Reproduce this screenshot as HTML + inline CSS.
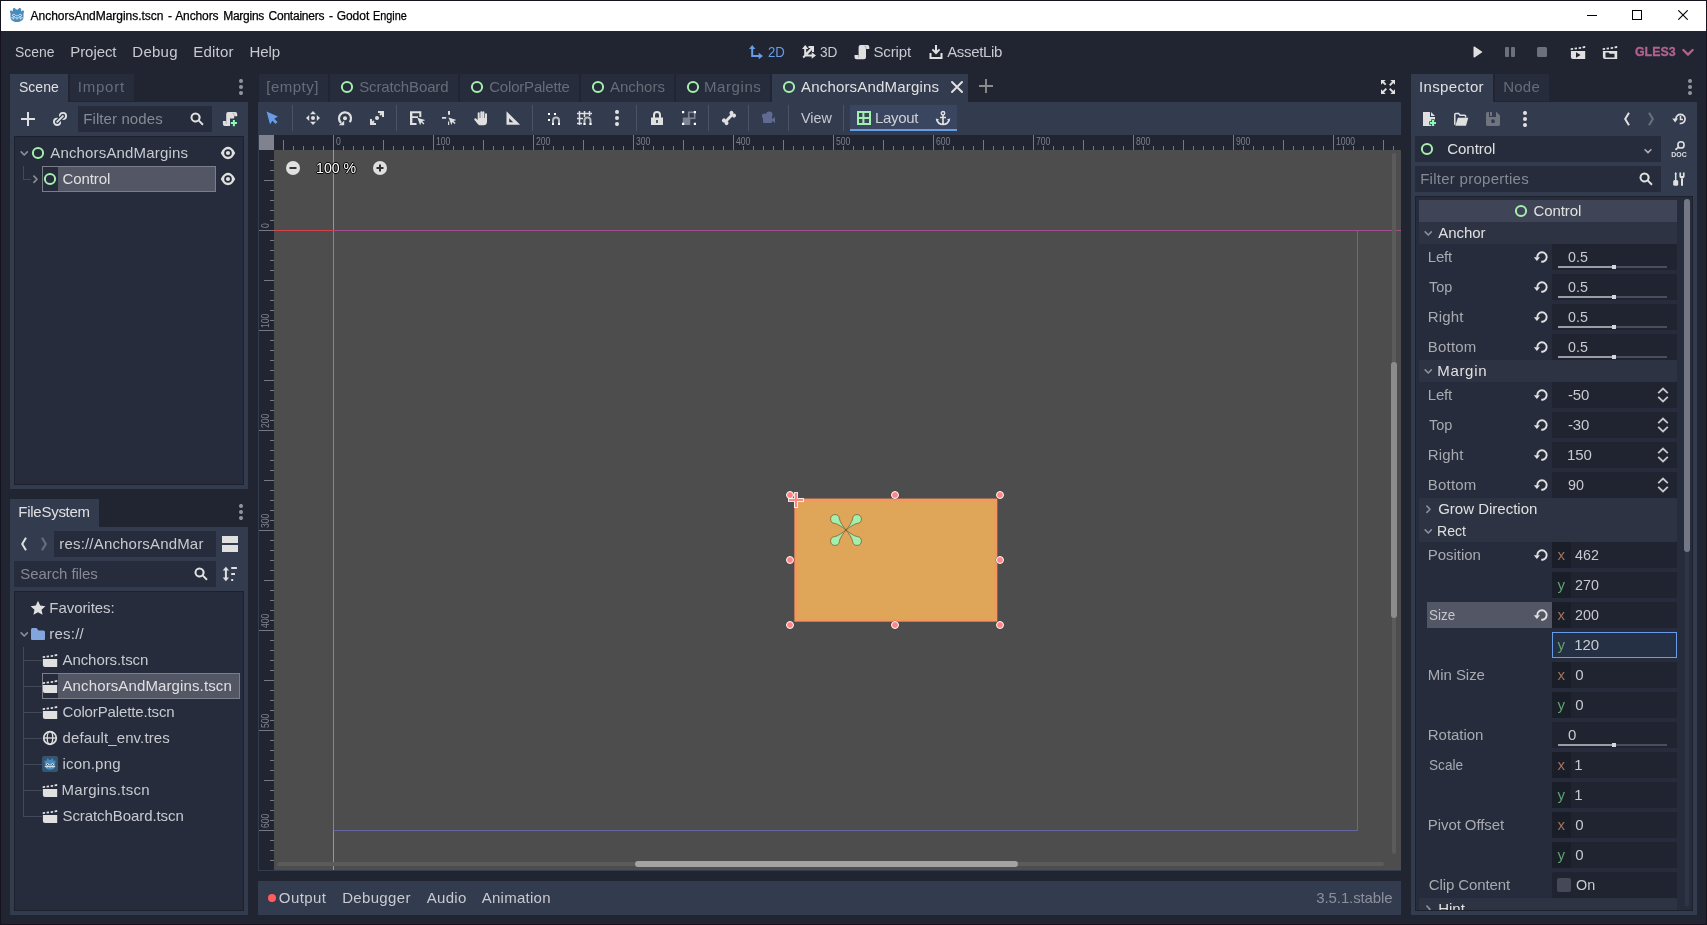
<!DOCTYPE html>
<html><head><meta charset="utf-8"><title>Godot</title>
<style>
html,body{margin:0;padding:0;}
body{width:1707px;height:925px;overflow:hidden;background:#202531;position:relative;font-family:"Liberation Sans",sans-serif;}
#r{position:absolute;left:0;top:0;width:1707px;height:925px;overflow:hidden;will-change:transform;}
#r div,#r span,#r svg{position:absolute;}
#r span{white-space:nowrap;}
</style></head><body><div id="r">
<div style="left:0px;top:0px;width:1707px;height:925px;background:#15131f;"></div>
<div style="left:1px;top:1px;width:1705px;height:30px;background:#ffffff;"></div>
<div style="left:1px;top:31px;width:1705px;height:893px;background:#202531;"></div>
<span style="left:30.60px;top:6.34px;font-size:12px;line-height:20px;color:#000000;font-weight:400;letter-spacing:-0.025px;-webkit-text-stroke:0.25px #000;">AnchorsAndMargins.tscn</span>
<span style="left:167.90px;top:6.34px;font-size:12px;line-height:20px;color:#000000;font-weight:400;-webkit-text-stroke:0.25px #000;">-</span>
<span style="left:175.20px;top:6.34px;font-size:12px;line-height:20px;color:#000000;font-weight:400;letter-spacing:-0.104px;-webkit-text-stroke:0.25px #000;">Anchors</span>
<span style="left:223.20px;top:6.34px;font-size:12px;line-height:20px;color:#000000;font-weight:400;letter-spacing:-0.263px;-webkit-text-stroke:0.25px #000;">Margins</span>
<span style="left:268.50px;top:6.34px;font-size:12px;line-height:20px;color:#000000;font-weight:400;letter-spacing:-0.226px;-webkit-text-stroke:0.25px #000;">Containers</span>
<span style="left:329.10px;top:6.34px;font-size:12px;line-height:20px;color:#000000;font-weight:400;-webkit-text-stroke:0.25px #000;">-</span>
<span style="left:336.70px;top:6.34px;font-size:12px;line-height:20px;color:#000000;font-weight:400;letter-spacing:-0.039px;-webkit-text-stroke:0.25px #000;">Godot</span>
<span style="left:373.30px;top:6.34px;font-size:12px;line-height:20px;color:#000000;font-weight:400;transform-origin:0 50%;transform:scaleX(0.9074);-webkit-text-stroke:0.25px #000;">Engine</span>
<div style="left:1587px;top:15px;width:10px;height:1px;background:#000;"></div>
<div style="left:1632px;top:10px;width:10px;height:10px;background:transparent;border:1px solid #000;box-sizing:border-box;"></div>
<svg style="left:1678.00px;top:10.00px;" width="10" height="10" viewBox="0 0 10 10"><path d="M0.3 0.3L9.7 9.7M9.7 0.3L0.3 9.7" stroke="#000" stroke-width="1.1" fill="none"/></svg>
<span style="left:15.20px;top:41.80px;font-size:15px;line-height:20px;color:#c8cad0;font-weight:400;transform-origin:0 50%;transform:scaleX(0.9291);">Scene</span>
<span style="left:70.30px;top:41.80px;font-size:15px;line-height:20px;color:#c8cad0;font-weight:400;letter-spacing:-0.086px;">Project</span>
<span style="left:132.30px;top:41.80px;font-size:15px;line-height:20px;color:#c8cad0;font-weight:400;letter-spacing:0.260px;">Debug</span>
<span style="left:193.20px;top:41.80px;font-size:15px;line-height:20px;color:#c8cad0;font-weight:400;letter-spacing:0.222px;">Editor</span>
<span style="left:249.50px;top:41.80px;font-size:15px;line-height:20px;color:#c8cad0;font-weight:400;letter-spacing:-0.069px;">Help</span>
<span style="left:767.60px;top:41.80px;font-size:15px;line-height:20px;color:#699ce8;font-weight:400;transform-origin:0 50%;transform:scaleX(0.8789);">2D</span>
<span style="left:820.00px;top:41.80px;font-size:15px;line-height:20px;color:#c8cad0;font-weight:400;transform-origin:0 50%;transform:scaleX(0.9099);">3D</span>
<span style="left:873.40px;top:41.80px;font-size:15px;line-height:20px;color:#c8cad0;font-weight:400;letter-spacing:-0.115px;">Script</span>
<span style="left:947.20px;top:41.80px;font-size:15px;line-height:20px;color:#c8cad0;font-weight:400;letter-spacing:-0.341px;">AssetLib</span>
<span style="left:1634.70px;top:42.32px;font-size:13.5px;line-height:20px;color:#b5628f;font-weight:700;transform-origin:0 50%;transform:scaleX(0.9161);-webkit-text-stroke:0.35px #b5628f;">GLES3</span>
<div style="left:10px;top:74px;width:58px;height:28px;background:#333b4f;"></div>
<div style="left:70px;top:74px;width:64px;height:27px;background:#262c3b;"></div>
<div style="left:10px;top:102px;width:238px;height:387px;background:#333b4f;"></div>
<span style="left:19.00px;top:76.80px;font-size:15px;line-height:20px;color:#e0e0e0;font-weight:400;transform-origin:0 50%;transform:scaleX(0.9339);">Scene</span>
<span style="left:77.80px;top:76.80px;font-size:15px;line-height:20px;color:#686c78;font-weight:400;letter-spacing:0.752px;">Import</span>
<div style="left:78px;top:106px;width:134px;height:26px;background:#262c3b;"></div>
<span style="left:83.20px;top:108.80px;font-size:15px;line-height:20px;color:#868a95;font-weight:400;letter-spacing:0.103px;">Filter nodes</span>
<div style="left:14px;top:136px;width:230px;height:349px;background:#262c3b;border:1px solid #1d212c;box-sizing:border-box;"></div>
<span style="left:50.30px;top:142.80px;font-size:15px;line-height:20px;color:#c8cad0;font-weight:400;letter-spacing:0.158px;">AnchorsAndMargins</span>
<div style="left:42px;top:166px;width:174px;height:26px;background:#535665;border:1px solid #7b7e89;box-sizing:border-box;"></div>
<div style="left:43px;top:167px;width:15px;height:24px;background:#262c3b;"></div>
<span style="left:62.50px;top:168.80px;font-size:15px;line-height:20px;color:#e0e0e0;font-weight:400;letter-spacing:-0.087px;">Control</span>
<div style="left:23px;top:166px;width:1px;height:14px;background:#434958;"></div>
<div style="left:23px;top:179px;width:8px;height:1px;background:#434958;"></div>
<div style="left:10px;top:499px;width:89px;height:28px;background:#333b4f;"></div>
<div style="left:10px;top:527px;width:238px;height:388px;background:#333b4f;"></div>
<span style="left:18.30px;top:502.30px;font-size:15px;line-height:20px;color:#e0e0e0;font-weight:400;letter-spacing:-0.265px;">FileSystem</span>
<div style="left:54px;top:531px;width:162px;height:26px;background:#262c3b;"></div>
<span style="left:59.30px;top:533.80px;font-size:15px;line-height:20px;color:#c8cad0;font-weight:400;letter-spacing:0.178px;">res://AnchorsAndMar</span>
<div style="left:222px;top:536px;width:16px;height:7px;background:#e0e0e0;"></div>
<div style="left:222px;top:545px;width:16px;height:7px;background:#e0e0e0;"></div>
<div style="left:14px;top:561px;width:202px;height:26px;background:#262c3b;"></div>
<span style="left:20.30px;top:563.80px;font-size:15px;line-height:20px;color:#868a95;font-weight:400;letter-spacing:-0.088px;">Search files</span>
<div style="left:14px;top:591px;width:230px;height:320px;background:#262c3b;border:1px solid #1d212c;box-sizing:border-box;"></div>
<span style="left:49.30px;top:597.80px;font-size:15px;line-height:20px;color:#c8cad0;font-weight:400;letter-spacing:-0.054px;">Favorites:</span>
<span style="left:49.30px;top:623.80px;font-size:15px;line-height:20px;color:#c8cad0;font-weight:400;letter-spacing:0.206px;">res://</span>
<div style="left:42px;top:673px;width:198px;height:26px;background:#535665;border:1px solid #7b7e89;box-sizing:border-box;"></div>
<div style="left:43px;top:674px;width:15px;height:24px;background:#262c3b;"></div>
<span style="left:62.50px;top:649.80px;font-size:15px;line-height:20px;color:#c8cad0;font-weight:400;letter-spacing:-0.078px;">Anchors.tscn</span>
<div style="left:24px;top:660px;width:18px;height:1px;background:#434958;"></div>
<span style="left:62.50px;top:675.80px;font-size:15px;line-height:20px;color:#e0e0e0;font-weight:400;letter-spacing:0.119px;">AnchorsAndMargins.tscn</span>
<div style="left:24px;top:686px;width:18px;height:1px;background:#434958;"></div>
<span style="left:62.50px;top:701.80px;font-size:15px;line-height:20px;color:#c8cad0;font-weight:400;letter-spacing:-0.130px;">ColorPalette.tscn</span>
<div style="left:24px;top:712px;width:18px;height:1px;background:#434958;"></div>
<span style="left:62.50px;top:727.80px;font-size:15px;line-height:20px;color:#c8cad0;font-weight:400;letter-spacing:0.105px;">default_env.tres</span>
<div style="left:24px;top:738px;width:18px;height:1px;background:#434958;"></div>
<span style="left:62.40px;top:753.80px;font-size:15px;line-height:20px;color:#c8cad0;font-weight:400;letter-spacing:0.204px;">icon.png</span>
<div style="left:24px;top:764px;width:18px;height:1px;background:#434958;"></div>
<span style="left:61.50px;top:779.80px;font-size:15px;line-height:20px;color:#c8cad0;font-weight:400;letter-spacing:0.274px;">Margins.tscn</span>
<div style="left:24px;top:790px;width:18px;height:1px;background:#434958;"></div>
<span style="left:62.50px;top:805.80px;font-size:15px;line-height:20px;color:#c8cad0;font-weight:400;letter-spacing:-0.082px;">ScratchBoard.tscn</span>
<div style="left:24px;top:816px;width:18px;height:1px;background:#434958;"></div>
<div style="left:23px;top:647px;width:1px;height:170px;background:#434958;"></div>
<div style="left:259px;top:74px;width:69px;height:28px;background:#262c3b;"></div>
<div style="left:330px;top:74px;width:128px;height:28px;background:#262c3b;"></div>
<div style="left:460px;top:74px;width:119px;height:28px;background:#262c3b;"></div>
<div style="left:581px;top:74px;width:93px;height:28px;background:#262c3b;"></div>
<div style="left:676px;top:74px;width:94px;height:28px;background:#262c3b;"></div>
<div style="left:772px;top:74px;width:196px;height:28px;background:#333b4f;"></div>
<span style="left:266.30px;top:76.80px;font-size:15px;line-height:20px;color:#686c78;font-weight:400;letter-spacing:0.481px;">[empty]</span>
<span style="left:359.20px;top:76.80px;font-size:15px;line-height:20px;color:#686c78;font-weight:400;letter-spacing:-0.140px;">ScratchBoard</span>
<span style="left:489.20px;top:76.80px;font-size:15px;line-height:20px;color:#686c78;font-weight:400;letter-spacing:-0.182px;">ColorPalette</span>
<span style="left:610.00px;top:76.80px;font-size:15px;line-height:20px;color:#686c78;font-weight:400;letter-spacing:-0.021px;">Anchors</span>
<span style="left:704.00px;top:76.80px;font-size:15px;line-height:20px;color:#686c78;font-weight:400;letter-spacing:0.575px;">Margins</span>
<span style="left:801.00px;top:76.80px;font-size:15px;line-height:20px;color:#e0e0e0;font-weight:400;letter-spacing:0.183px;">AnchorsAndMargins</span>
<div style="left:258px;top:102px;width:1143px;height:769px;background:#333b4f;"></div>
<div style="left:259px;top:135px;width:1142px;height:15px;background:#202531;"></div>
<div style="left:259px;top:150px;width:15px;height:720px;background:#202531;"></div>
<div style="left:259px;top:135px;width:15px;height:15px;background:#80838f;"></div>
<div style="left:274px;top:150px;width:1127px;height:720px;background:#4d4d4d;"></div>
<span style="left:801.00px;top:107.80px;font-size:15px;line-height:20px;color:#c8cad0;font-weight:400;transform-origin:0 50%;transform:scaleX(0.9565);">View</span>
<div style="left:850px;top:105px;width:107px;height:26px;background:#3a4560;"></div>
<div style="left:850px;top:129px;width:107px;height:2px;background:#699ce8;"></div>
<span style="left:874.90px;top:107.80px;font-size:15px;line-height:20px;color:#cfd1d6;font-weight:400;letter-spacing:-0.294px;">Layout</span>
<div style="left:258px;top:881px;width:1143px;height:34px;background:#333b4f;"></div>
<span style="left:278.80px;top:887.80px;font-size:15px;line-height:20px;color:#c8cad0;font-weight:400;letter-spacing:0.428px;">Output</span>
<span style="left:342.20px;top:887.80px;font-size:15px;line-height:20px;color:#c8cad0;font-weight:400;letter-spacing:0.331px;">Debugger</span>
<span style="left:426.80px;top:887.80px;font-size:15px;line-height:20px;color:#c8cad0;font-weight:400;letter-spacing:0.295px;">Audio</span>
<span style="left:481.70px;top:887.80px;font-size:15px;line-height:20px;color:#c8cad0;font-weight:400;letter-spacing:0.268px;">Animation</span>
<span style="left:1316.30px;top:887.80px;font-size:15px;line-height:20px;color:#8c909b;font-weight:400;letter-spacing:-0.110px;">3.5.1.stable</span>
<div style="left:268px;top:894px;width:8px;height:8px;background:#ff5d5d;border-radius:50%;"></div>
<div style="left:1411px;top:74px;width:82px;height:28px;background:#333b4f;"></div>
<div style="left:1495px;top:74px;width:54px;height:27px;background:#262c3b;"></div>
<div style="left:1411px;top:102px;width:286px;height:813px;background:#333b4f;"></div>
<span style="left:1419.00px;top:76.80px;font-size:15px;line-height:20px;color:#e0e0e0;font-weight:400;letter-spacing:0.362px;">Inspector</span>
<span style="left:1503.30px;top:76.80px;font-size:15px;line-height:20px;color:#686c78;font-weight:400;letter-spacing:0.194px;">Node</span>
<div style="left:1415px;top:136px;width:246px;height:26px;background:#262c3b;"></div>
<span style="left:1447.30px;top:138.80px;font-size:15px;line-height:20px;color:#e0e0e0;font-weight:400;letter-spacing:-0.054px;">Control</span>
<div style="left:1415px;top:166px;width:246px;height:26px;background:#262c3b;"></div>
<span style="left:1420.20px;top:168.80px;font-size:15px;line-height:20px;color:#868a95;font-weight:400;letter-spacing:0.269px;">Filter properties</span>
<div style="left:1415px;top:196px;width:278px;height:715px;background:#262c3b;border:1px solid #1d212c;box-sizing:border-box;"></div>
<div style="left:1419px;top:200px;width:258px;height:22px;background:#3f4556;"></div>
<span style="left:1533.60px;top:200.80px;font-size:15px;line-height:20px;color:#e0e0e0;font-weight:400;letter-spacing:-0.104px;">Control</span>
<div style="left:1419px;top:222px;width:258px;height:22px;background:#2d3343;"></div>
<span style="left:1438.20px;top:222.80px;font-size:15px;line-height:20px;color:#e0e0e0;font-weight:400;letter-spacing:-0.046px;">Anchor</span>
<svg style="left:1422.75px;top:228.25px;" width="10.5" height="10.5" viewBox="2 2 12 12"><path d="M4.5 6.5L8 10L11.5 6.5" stroke="#8a8e99" stroke-width="1.9" fill="none" stroke-linecap="round" stroke-linejoin="round"/></svg>
<span style="left:1427.80px;top:246.80px;font-size:15px;line-height:20px;color:#a8aab0;font-weight:400;letter-spacing:-0.217px;">Left</span>
<svg style="left:1533.30px;top:249.00px;" width="16" height="16" viewBox="0 0 16 16"><path d="M4.3 8.5A4.7 4.7 0 1 1 8.2 12.65" fill="none" stroke="#e0e0e0" stroke-width="1.9"/><path d="M0.8 8.2h6.2l-3.1 3.7z" fill="#e0e0e0"/></svg>
<div style="left:1552px;top:244px;width:125px;height:26px;background:#1f2430;"></div>
<span style="left:1568.00px;top:246.80px;font-size:15px;line-height:20px;color:#c8cad0;font-weight:400;transform-origin:0 50%;transform:scaleX(0.9508);">0.5</span>
<div style="left:1558px;top:266px;width:56px;height:2px;background:#9a9da6;"></div>
<div style="left:1614px;top:266px;width:53px;height:2px;background:#4a4e5b;"></div>
<div style="left:1612px;top:265px;width:4px;height:4px;background:#d6d7da;"></div>
<span style="left:1428.80px;top:276.80px;font-size:15px;line-height:20px;color:#a8aab0;font-weight:400;transform-origin:0 50%;transform:scaleX(0.9647);">Top</span>
<svg style="left:1533.30px;top:279.00px;" width="16" height="16" viewBox="0 0 16 16"><path d="M4.3 8.5A4.7 4.7 0 1 1 8.2 12.65" fill="none" stroke="#e0e0e0" stroke-width="1.9"/><path d="M0.8 8.2h6.2l-3.1 3.7z" fill="#e0e0e0"/></svg>
<div style="left:1552px;top:274px;width:125px;height:26px;background:#1f2430;"></div>
<span style="left:1568.00px;top:276.80px;font-size:15px;line-height:20px;color:#c8cad0;font-weight:400;transform-origin:0 50%;transform:scaleX(0.9508);">0.5</span>
<div style="left:1558px;top:296px;width:56px;height:2px;background:#9a9da6;"></div>
<div style="left:1614px;top:296px;width:53px;height:2px;background:#4a4e5b;"></div>
<div style="left:1612px;top:295px;width:4px;height:4px;background:#d6d7da;"></div>
<span style="left:1427.80px;top:306.80px;font-size:15px;line-height:20px;color:#a8aab0;font-weight:400;letter-spacing:0.138px;">Right</span>
<svg style="left:1533.30px;top:309.00px;" width="16" height="16" viewBox="0 0 16 16"><path d="M4.3 8.5A4.7 4.7 0 1 1 8.2 12.65" fill="none" stroke="#e0e0e0" stroke-width="1.9"/><path d="M0.8 8.2h6.2l-3.1 3.7z" fill="#e0e0e0"/></svg>
<div style="left:1552px;top:304px;width:125px;height:26px;background:#1f2430;"></div>
<span style="left:1568.00px;top:306.80px;font-size:15px;line-height:20px;color:#c8cad0;font-weight:400;transform-origin:0 50%;transform:scaleX(0.9508);">0.5</span>
<div style="left:1558px;top:326px;width:56px;height:2px;background:#9a9da6;"></div>
<div style="left:1614px;top:326px;width:53px;height:2px;background:#4a4e5b;"></div>
<div style="left:1612px;top:325px;width:4px;height:4px;background:#d6d7da;"></div>
<span style="left:1427.80px;top:336.80px;font-size:15px;line-height:20px;color:#a8aab0;font-weight:400;letter-spacing:0.195px;">Bottom</span>
<svg style="left:1533.30px;top:339.00px;" width="16" height="16" viewBox="0 0 16 16"><path d="M4.3 8.5A4.7 4.7 0 1 1 8.2 12.65" fill="none" stroke="#e0e0e0" stroke-width="1.9"/><path d="M0.8 8.2h6.2l-3.1 3.7z" fill="#e0e0e0"/></svg>
<div style="left:1552px;top:334px;width:125px;height:26px;background:#1f2430;"></div>
<span style="left:1568.00px;top:336.80px;font-size:15px;line-height:20px;color:#c8cad0;font-weight:400;transform-origin:0 50%;transform:scaleX(0.9508);">0.5</span>
<div style="left:1558px;top:356px;width:56px;height:2px;background:#9a9da6;"></div>
<div style="left:1614px;top:356px;width:53px;height:2px;background:#4a4e5b;"></div>
<div style="left:1612px;top:355px;width:4px;height:4px;background:#d6d7da;"></div>
<div style="left:1419px;top:360px;width:258px;height:22px;background:#2d3343;"></div>
<span style="left:1437.20px;top:360.80px;font-size:15px;line-height:20px;color:#e0e0e0;font-weight:400;letter-spacing:0.699px;">Margin</span>
<svg style="left:1422.75px;top:366.25px;" width="10.5" height="10.5" viewBox="2 2 12 12"><path d="M4.5 6.5L8 10L11.5 6.5" stroke="#8a8e99" stroke-width="1.9" fill="none" stroke-linecap="round" stroke-linejoin="round"/></svg>
<span style="left:1427.80px;top:384.80px;font-size:15px;line-height:20px;color:#a8aab0;font-weight:400;letter-spacing:-0.217px;">Left</span>
<svg style="left:1533.30px;top:387.00px;" width="16" height="16" viewBox="0 0 16 16"><path d="M4.3 8.5A4.7 4.7 0 1 1 8.2 12.65" fill="none" stroke="#e0e0e0" stroke-width="1.9"/><path d="M0.8 8.2h6.2l-3.1 3.7z" fill="#e0e0e0"/></svg>
<div style="left:1552px;top:382px;width:125px;height:26px;background:#1f2430;"></div>
<span style="left:1568.00px;top:384.80px;font-size:15px;line-height:20px;color:#c8cad0;font-weight:400;letter-spacing:-0.169px;">-50</span>
<svg style="left:1655.00px;top:387.00px;" width="16" height="16" viewBox="0 0 16 16"><path d="M3.200 6.200L8 1.600L12.800 6.200M3.200 9.800L8 14.400L12.800 9.800" stroke="#c8c8c8" stroke-width="1.800" fill="none"/></svg>
<span style="left:1428.80px;top:414.80px;font-size:15px;line-height:20px;color:#a8aab0;font-weight:400;transform-origin:0 50%;transform:scaleX(0.9647);">Top</span>
<svg style="left:1533.30px;top:417.00px;" width="16" height="16" viewBox="0 0 16 16"><path d="M4.3 8.5A4.7 4.7 0 1 1 8.2 12.65" fill="none" stroke="#e0e0e0" stroke-width="1.9"/><path d="M0.8 8.2h6.2l-3.1 3.7z" fill="#e0e0e0"/></svg>
<div style="left:1552px;top:412px;width:125px;height:26px;background:#1f2430;"></div>
<span style="left:1568.00px;top:414.80px;font-size:15px;line-height:20px;color:#c8cad0;font-weight:400;letter-spacing:-0.169px;">-30</span>
<svg style="left:1655.00px;top:417.00px;" width="16" height="16" viewBox="0 0 16 16"><path d="M3.200 6.200L8 1.600L12.800 6.200M3.200 9.800L8 14.400L12.800 9.800" stroke="#c8c8c8" stroke-width="1.800" fill="none"/></svg>
<span style="left:1427.80px;top:444.80px;font-size:15px;line-height:20px;color:#a8aab0;font-weight:400;letter-spacing:0.138px;">Right</span>
<svg style="left:1533.30px;top:447.00px;" width="16" height="16" viewBox="0 0 16 16"><path d="M4.3 8.5A4.7 4.7 0 1 1 8.2 12.65" fill="none" stroke="#e0e0e0" stroke-width="1.9"/><path d="M0.8 8.2h6.2l-3.1 3.7z" fill="#e0e0e0"/></svg>
<div style="left:1552px;top:442px;width:125px;height:26px;background:#1f2430;"></div>
<span style="left:1567.00px;top:444.80px;font-size:15px;line-height:20px;color:#c8cad0;font-weight:400;letter-spacing:-0.042px;">150</span>
<svg style="left:1655.00px;top:447.00px;" width="16" height="16" viewBox="0 0 16 16"><path d="M3.200 6.200L8 1.600L12.800 6.200M3.200 9.800L8 14.400L12.800 9.800" stroke="#c8c8c8" stroke-width="1.800" fill="none"/></svg>
<span style="left:1427.80px;top:474.80px;font-size:15px;line-height:20px;color:#a8aab0;font-weight:400;letter-spacing:0.195px;">Bottom</span>
<svg style="left:1533.30px;top:477.00px;" width="16" height="16" viewBox="0 0 16 16"><path d="M4.3 8.5A4.7 4.7 0 1 1 8.2 12.65" fill="none" stroke="#e0e0e0" stroke-width="1.9"/><path d="M0.8 8.2h6.2l-3.1 3.7z" fill="#e0e0e0"/></svg>
<div style="left:1552px;top:472px;width:125px;height:26px;background:#1f2430;"></div>
<span style="left:1568.00px;top:474.80px;font-size:15px;line-height:20px;color:#c8cad0;font-weight:400;transform-origin:0 50%;transform:scaleX(0.9546);">90</span>
<svg style="left:1655.00px;top:477.00px;" width="16" height="16" viewBox="0 0 16 16"><path d="M3.200 6.200L8 1.600L12.800 6.200M3.200 9.800L8 14.400L12.800 9.800" stroke="#c8c8c8" stroke-width="1.800" fill="none"/></svg>
<div style="left:1419px;top:498px;width:258px;height:22px;background:#2d3343;"></div>
<span style="left:1438.20px;top:498.80px;font-size:15px;line-height:20px;color:#e0e0e0;font-weight:400;letter-spacing:-0.004px;">Grow Direction</span>
<svg style="left:1422.75px;top:503.75px;" width="10.5" height="10.5" viewBox="2 2 12 12"><path d="M6.5 4.5L10 8L6.5 11.5" stroke="#8a8e99" stroke-width="1.9" fill="none" stroke-linecap="round" stroke-linejoin="round"/></svg>
<div style="left:1419px;top:520px;width:258px;height:22px;background:#2d3343;"></div>
<span style="left:1437.26px;top:520.80px;font-size:15px;line-height:20px;color:#e0e0e0;font-weight:400;transform-origin:0 50%;transform:scaleX(0.9389);">Rect</span>
<svg style="left:1422.75px;top:526.25px;" width="10.5" height="10.5" viewBox="2 2 12 12"><path d="M4.5 6.5L8 10L11.5 6.5" stroke="#8a8e99" stroke-width="1.9" fill="none" stroke-linecap="round" stroke-linejoin="round"/></svg>
<span style="left:1427.80px;top:544.80px;font-size:15px;line-height:20px;color:#a8aab0;font-weight:400;letter-spacing:-0.046px;">Position</span>
<svg style="left:1533.30px;top:547.00px;" width="16" height="16" viewBox="0 0 16 16"><path d="M4.3 8.5A4.7 4.7 0 1 1 8.2 12.65" fill="none" stroke="#e0e0e0" stroke-width="1.9"/><path d="M0.8 8.2h6.2l-3.1 3.7z" fill="#e0e0e0"/></svg>
<div style="left:1552px;top:542px;width:125px;height:26px;background:#1f2430;"></div>
<div style="left:1552px;top:542px;width:19px;height:26px;background:#1a1e29;"></div>
<span style="left:1557.60px;top:544.80px;font-size:15px;line-height:20px;color:#a4705f;font-weight:400;">x</span>
<span style="left:1575.20px;top:544.80px;font-size:15px;line-height:20px;color:#c8cad0;font-weight:400;transform-origin:0 50%;transform:scaleX(0.9520);">462</span>
<div style="left:1552px;top:572px;width:125px;height:26px;background:#1f2430;"></div>
<div style="left:1552px;top:572px;width:19px;height:26px;background:#1a1e29;"></div>
<span style="left:1557.60px;top:574.80px;font-size:15px;line-height:20px;color:#5fa070;font-weight:400;">y</span>
<span style="left:1575.20px;top:574.80px;font-size:15px;line-height:20px;color:#c8cad0;font-weight:400;transform-origin:0 50%;transform:scaleX(0.9520);">270</span>
<div style="left:1427px;top:602px;width:125px;height:26px;background:#535665;"></div>
<span style="left:1428.80px;top:604.80px;font-size:15px;line-height:20px;color:#c4c6cc;font-weight:400;transform-origin:0 50%;transform:scaleX(0.8947);">Size</span>
<svg style="left:1533.30px;top:607.00px;" width="16" height="16" viewBox="0 0 16 16"><path d="M4.3 8.5A4.7 4.7 0 1 1 8.2 12.65" fill="none" stroke="#e0e0e0" stroke-width="1.9"/><path d="M0.8 8.2h6.2l-3.1 3.7z" fill="#e0e0e0"/></svg>
<div style="left:1552px;top:602px;width:125px;height:26px;background:#1f2430;"></div>
<div style="left:1552px;top:602px;width:19px;height:26px;background:#1a1e29;"></div>
<span style="left:1557.60px;top:604.80px;font-size:15px;line-height:20px;color:#a4705f;font-weight:400;">x</span>
<span style="left:1575.20px;top:604.80px;font-size:15px;line-height:20px;color:#c8cad0;font-weight:400;transform-origin:0 50%;transform:scaleX(0.9520);">200</span>
<div style="left:1552px;top:632px;width:125px;height:26px;background:#263045;border:1px solid #699ce8;box-sizing:border-box;"></div>
<span style="left:1557.60px;top:634.80px;font-size:15px;line-height:20px;color:#5fa070;font-weight:400;">y</span>
<span style="left:1574.20px;top:634.80px;font-size:15px;line-height:20px;color:#c8cad0;font-weight:400;letter-spacing:-0.092px;">120</span>
<span style="left:1427.80px;top:664.80px;font-size:15px;line-height:20px;color:#a8aab0;font-weight:400;letter-spacing:-0.054px;">Min Size</span>
<div style="left:1552px;top:662px;width:125px;height:26px;background:#1f2430;"></div>
<div style="left:1552px;top:662px;width:19px;height:26px;background:#1a1e29;"></div>
<span style="left:1557.60px;top:664.80px;font-size:15px;line-height:20px;color:#a4705f;font-weight:400;">x</span>
<span style="left:1575.20px;top:664.80px;font-size:15px;line-height:20px;color:#c8cad0;font-weight:400;">0</span>
<div style="left:1552px;top:692px;width:125px;height:26px;background:#1f2430;"></div>
<div style="left:1552px;top:692px;width:19px;height:26px;background:#1a1e29;"></div>
<span style="left:1557.60px;top:694.80px;font-size:15px;line-height:20px;color:#5fa070;font-weight:400;">y</span>
<span style="left:1575.20px;top:694.80px;font-size:15px;line-height:20px;color:#c8cad0;font-weight:400;">0</span>
<span style="left:1427.80px;top:724.80px;font-size:15px;line-height:20px;color:#a8aab0;font-weight:400;letter-spacing:-0.047px;">Rotation</span>
<div style="left:1552px;top:722px;width:125px;height:26px;background:#1f2430;"></div>
<span style="left:1568.00px;top:724.80px;font-size:15px;line-height:20px;color:#c8cad0;font-weight:400;">0</span>
<div style="left:1558px;top:744px;width:56px;height:2px;background:#9a9da6;"></div>
<div style="left:1614px;top:744px;width:53px;height:2px;background:#4a4e5b;"></div>
<div style="left:1612px;top:743px;width:4px;height:4px;background:#d6d7da;"></div>
<span style="left:1428.80px;top:754.80px;font-size:15px;line-height:20px;color:#a8aab0;font-weight:400;transform-origin:0 50%;transform:scaleX(0.9091);">Scale</span>
<div style="left:1552px;top:752px;width:125px;height:26px;background:#1f2430;"></div>
<div style="left:1552px;top:752px;width:19px;height:26px;background:#1a1e29;"></div>
<span style="left:1557.60px;top:754.80px;font-size:15px;line-height:20px;color:#a4705f;font-weight:400;">x</span>
<span style="left:1574.20px;top:754.80px;font-size:15px;line-height:20px;color:#c8cad0;font-weight:400;">1</span>
<div style="left:1552px;top:782px;width:125px;height:26px;background:#1f2430;"></div>
<div style="left:1552px;top:782px;width:19px;height:26px;background:#1a1e29;"></div>
<span style="left:1557.60px;top:784.80px;font-size:15px;line-height:20px;color:#5fa070;font-weight:400;">y</span>
<span style="left:1574.20px;top:784.80px;font-size:15px;line-height:20px;color:#c8cad0;font-weight:400;">1</span>
<span style="left:1427.80px;top:814.80px;font-size:15px;line-height:20px;color:#a8aab0;font-weight:400;letter-spacing:-0.081px;">Pivot Offset</span>
<div style="left:1552px;top:812px;width:125px;height:26px;background:#1f2430;"></div>
<div style="left:1552px;top:812px;width:19px;height:26px;background:#1a1e29;"></div>
<span style="left:1557.60px;top:814.80px;font-size:15px;line-height:20px;color:#a4705f;font-weight:400;">x</span>
<span style="left:1575.20px;top:814.80px;font-size:15px;line-height:20px;color:#c8cad0;font-weight:400;">0</span>
<div style="left:1552px;top:842px;width:125px;height:26px;background:#1f2430;"></div>
<div style="left:1552px;top:842px;width:19px;height:26px;background:#1a1e29;"></div>
<span style="left:1557.60px;top:844.80px;font-size:15px;line-height:20px;color:#5fa070;font-weight:400;">y</span>
<span style="left:1575.20px;top:844.80px;font-size:15px;line-height:20px;color:#c8cad0;font-weight:400;">0</span>
<span style="left:1428.80px;top:874.80px;font-size:15px;line-height:20px;color:#a8aab0;font-weight:400;letter-spacing:-0.107px;">Clip Content</span>
<div style="left:1552px;top:872px;width:125px;height:26px;background:#1f2430;"></div>
<div style="left:1557px;top:878px;width:14px;height:14px;background:#454957;border-radius:2px;"></div>
<span style="left:1576.40px;top:874.80px;font-size:15px;line-height:20px;color:#c8cad0;font-weight:400;transform-origin:0 50%;transform:scaleX(0.9559);">On</span>
<div style="left:1416px;top:898px;width:276px;height:12px;overflow:hidden;">
<div style="left:3px;top:0px;width:258px;height:22px;background:#2d3343;"></div>
<span style="left:22.2px;top:0.80px;font-size:15px;line-height:20px;color:#e0e0e0;">Hint</span>
<svg style="left:6.7px;top:5.7px" width="10.5" height="10.5" viewBox="2 2 12 12"><path d="M6.5 4.5L10 8L6.5 11.5" stroke="#8a8e99" stroke-width="2" fill="none" stroke-linecap="round" stroke-linejoin="round"/></svg>
</div>
<div style="left:1685px;top:199px;width:4px;height:708px;background:#2f3545;border-radius:2px;"></div>
<div style="left:1684px;top:199px;width:6px;height:353px;background:#747886;border-radius:3px;"></div>
<div style="left:274px;top:150px;width:1127px;height:720px;overflow:hidden;">
<div style="left:59px;top:80px;width:1025px;height:601px;background:transparent;border:1px solid #6466a3;box-sizing:border-box;"></div>
<div style="left:0px;top:80px;width:59px;height:1px;background:#d4414b;"></div>
<div style="left:59px;top:80px;width:1068px;height:1px;background:#a04f8d;"></div>
<div style="left:59px;top:0px;width:1px;height:80px;background:#8db516;"></div>
<div style="left:59px;top:81px;width:1px;height:600px;background:#72996a;"></div>
<div style="left:59px;top:681px;width:1px;height:39px;background:#8db516;"></div>
<svg style="left:506px;top:335px" width="232" height="152" viewBox="780 485 232 152"><rect x="795.6" y="499.8" width="200.500" height="120.600" fill="#dfa559" stroke="#f7955f" stroke-width="2.500"/><circle cx="790" cy="495" r="4.300" fill="#333" fill-opacity=".750"/><circle cx="790" cy="495" r="3.500" fill="#ff8484" stroke="#fff" stroke-width="1"/><circle cx="895" cy="495" r="4.300" fill="#333" fill-opacity=".750"/><circle cx="895" cy="495" r="3.500" fill="#ff8484" stroke="#fff" stroke-width="1"/><circle cx="1000" cy="495" r="4.300" fill="#333" fill-opacity=".750"/><circle cx="1000" cy="495" r="3.500" fill="#ff8484" stroke="#fff" stroke-width="1"/><circle cx="790" cy="560" r="4.300" fill="#333" fill-opacity=".750"/><circle cx="790" cy="560" r="3.500" fill="#ff8484" stroke="#fff" stroke-width="1"/><circle cx="1000" cy="560" r="4.300" fill="#333" fill-opacity=".750"/><circle cx="1000" cy="560" r="3.500" fill="#ff8484" stroke="#fff" stroke-width="1"/><circle cx="790" cy="625" r="4.300" fill="#333" fill-opacity=".750"/><circle cx="790" cy="625" r="3.500" fill="#ff8484" stroke="#fff" stroke-width="1"/><circle cx="895" cy="625" r="4.300" fill="#333" fill-opacity=".750"/><circle cx="895" cy="625" r="3.500" fill="#ff8484" stroke="#fff" stroke-width="1"/><circle cx="1000" cy="625" r="4.300" fill="#333" fill-opacity=".750"/><circle cx="1000" cy="625" r="3.500" fill="#ff8484" stroke="#fff" stroke-width="1"/></svg>
<svg style="left:552px;top:360px" width="40" height="40" viewBox="-20 -20 40 40"><path d="M0 0C-2.500 -2.200 -8.400 -6.360 -11.380 -6.620A4.400 4.400 0 1 1 -6.620 -11.380C-6.360 -8.400 -2.200 -2.500 0 0Z" fill="#a5efac" stroke="#6a5630" stroke-width="0.700"/><g transform="scale(-1 1)"><path d="M0 0C-2.500 -2.200 -8.400 -6.360 -11.380 -6.620A4.400 4.400 0 1 1 -6.620 -11.380C-6.360 -8.400 -2.200 -2.500 0 0Z" fill="#a5efac" stroke="#6a5630" stroke-width="0.700"/></g><g transform="scale(1 -1)"><path d="M0 0C-2.500 -2.200 -8.400 -6.360 -11.380 -6.620A4.400 4.400 0 1 1 -6.620 -11.380C-6.360 -8.400 -2.200 -2.500 0 0Z" fill="#a5efac" stroke="#6a5630" stroke-width="0.700"/></g><g transform="scale(-1 -1)"><path d="M0 0C-2.500 -2.200 -8.400 -6.360 -11.380 -6.620A4.400 4.400 0 1 1 -6.620 -11.380C-6.360 -8.400 -2.200 -2.500 0 0Z" fill="#a5efac" stroke="#6a5630" stroke-width="0.700"/></g></svg>
<svg style="left:512px;top:340px" width="20" height="20" viewBox="-10 -10 20 20"><path d="M-2 -8h4v6h6v4h-6v6h-4v-6h-6v-4h6z" fill="#ffffff" fill-opacity="0.85"/><path d="M-1 -7h2v6h6v2h-6v6h-2v-6h-6v-2h6z" fill="#ff8484"/></svg>
<div style="left:1118px;top:3px;width:4px;height:701px;background:#5b5b5b;border-radius:2px;"></div>
<div style="left:1117px;top:212px;width:6px;height:256px;background:#8c8c8c;border-radius:3px;"></div>
<div style="left:3px;top:712px;width:1107px;height:4px;background:#5b5b5b;border-radius:2px;"></div>
<div style="left:361px;top:711px;width:383px;height:6px;background:#a3a3a3;border-radius:3px;"></div>
</div>
<svg style="left:0;top:0" width="1707" height="160" viewBox="0 0 1707 160"><path d="M283.5 140V150M293.5 146V150M303.5 146V150M313.5 146V150M323.5 146V150M333.5 135V150M343.5 146V150M353.5 146V150M363.5 146V150M373.5 146V150M383.5 140V150M393.5 146V150M403.5 146V150M413.5 146V150M423.5 146V150M433.5 135V150M443.5 146V150M453.5 146V150M463.5 146V150M473.5 146V150M483.5 140V150M493.5 146V150M503.5 146V150M513.5 146V150M523.5 146V150M533.5 135V150M543.5 146V150M553.5 146V150M563.5 146V150M573.5 146V150M583.5 140V150M593.5 146V150M603.5 146V150M613.5 146V150M623.5 146V150M633.5 135V150M643.5 146V150M653.5 146V150M663.5 146V150M673.5 146V150M683.5 140V150M693.5 146V150M703.5 146V150M713.5 146V150M723.5 146V150M733.5 135V150M743.5 146V150M753.5 146V150M763.5 146V150M773.5 146V150M783.5 140V150M793.5 146V150M803.5 146V150M813.5 146V150M823.5 146V150M833.5 135V150M843.5 146V150M853.5 146V150M863.5 146V150M873.5 146V150M883.5 140V150M893.5 146V150M903.5 146V150M913.5 146V150M923.5 146V150M933.5 135V150M943.5 146V150M953.5 146V150M963.5 146V150M973.5 146V150M983.5 140V150M993.5 146V150M1003.5 146V150M1013.5 146V150M1023.5 146V150M1033.5 135V150M1043.5 146V150M1053.5 146V150M1063.5 146V150M1073.5 146V150M1083.5 140V150M1093.5 146V150M1103.5 146V150M1113.5 146V150M1123.5 146V150M1133.5 135V150M1143.5 146V150M1153.5 146V150M1163.5 146V150M1173.5 146V150M1183.5 140V150M1193.5 146V150M1203.5 146V150M1213.5 146V150M1223.5 146V150M1233.5 135V150M1243.5 146V150M1253.5 146V150M1263.5 146V150M1273.5 146V150M1283.5 140V150M1293.5 146V150M1303.5 146V150M1313.5 146V150M1323.5 146V150M1333.5 135V150M1343.5 146V150M1353.5 146V150M1363.5 146V150M1373.5 146V150M1383.5 140V150M1393.5 146V150" stroke="#757987" stroke-width="1" fill="none"/></svg>
<span style="left:336px;top:136px;font-size:10px;line-height:11px;color:#7d818d;transform-origin:0 0;transform:scaleX(0.86);">0</span>
<span style="left:436px;top:136px;font-size:10px;line-height:11px;color:#7d818d;transform-origin:0 0;transform:scaleX(0.86);">100</span>
<span style="left:536px;top:136px;font-size:10px;line-height:11px;color:#7d818d;transform-origin:0 0;transform:scaleX(0.86);">200</span>
<span style="left:636px;top:136px;font-size:10px;line-height:11px;color:#7d818d;transform-origin:0 0;transform:scaleX(0.86);">300</span>
<span style="left:736px;top:136px;font-size:10px;line-height:11px;color:#7d818d;transform-origin:0 0;transform:scaleX(0.86);">400</span>
<span style="left:836px;top:136px;font-size:10px;line-height:11px;color:#7d818d;transform-origin:0 0;transform:scaleX(0.86);">500</span>
<span style="left:936px;top:136px;font-size:10px;line-height:11px;color:#7d818d;transform-origin:0 0;transform:scaleX(0.86);">600</span>
<span style="left:1036px;top:136px;font-size:10px;line-height:11px;color:#7d818d;transform-origin:0 0;transform:scaleX(0.86);">700</span>
<span style="left:1136px;top:136px;font-size:10px;line-height:11px;color:#7d818d;transform-origin:0 0;transform:scaleX(0.86);">800</span>
<span style="left:1236px;top:136px;font-size:10px;line-height:11px;color:#7d818d;transform-origin:0 0;transform:scaleX(0.86);">900</span>
<span style="left:1336px;top:136px;font-size:10px;line-height:11px;color:#7d818d;transform-origin:0 0;transform:scaleX(0.86);">1000</span>
<svg style="left:0;top:0" width="280" height="925" viewBox="0 0 280 925"><path d="M270 160.5H274M270 170.5H274M264 180.5H274M270 190.5H274M270 200.5H274M270 210.5H274M270 220.5H274M259 230.5H274M270 240.5H274M270 250.5H274M270 260.5H274M270 270.5H274M264 280.5H274M270 290.5H274M270 300.5H274M270 310.5H274M270 320.5H274M259 330.5H274M270 340.5H274M270 350.5H274M270 360.5H274M270 370.5H274M264 380.5H274M270 390.5H274M270 400.5H274M270 410.5H274M270 420.5H274M259 430.5H274M270 440.5H274M270 450.5H274M270 460.5H274M270 470.5H274M264 480.5H274M270 490.5H274M270 500.5H274M270 510.5H274M270 520.5H274M259 530.5H274M270 540.5H274M270 550.5H274M270 560.5H274M270 570.5H274M264 580.5H274M270 590.5H274M270 600.5H274M270 610.5H274M270 620.5H274M259 630.5H274M270 640.5H274M270 650.5H274M270 660.5H274M270 670.5H274M264 680.5H274M270 690.5H274M270 700.5H274M270 710.5H274M270 720.5H274M259 730.5H274M270 740.5H274M270 750.5H274M270 760.5H274M270 770.5H274M264 780.5H274M270 790.5H274M270 800.5H274M270 810.5H274M270 820.5H274M259 830.5H274M270 840.5H274M270 850.5H274M270 860.5H274" stroke="#757987" stroke-width="1" fill="none"/></svg>
<span style="left:259.5px;top:227.5px;font-size:10px;line-height:11px;color:#7d818d;transform-origin:0 0;transform:rotate(-90deg) scaleX(0.86);">0</span>
<span style="left:259.5px;top:327.5px;font-size:10px;line-height:11px;color:#7d818d;transform-origin:0 0;transform:rotate(-90deg) scaleX(0.86);">100</span>
<span style="left:259.5px;top:427.5px;font-size:10px;line-height:11px;color:#7d818d;transform-origin:0 0;transform:rotate(-90deg) scaleX(0.86);">200</span>
<span style="left:259.5px;top:527.5px;font-size:10px;line-height:11px;color:#7d818d;transform-origin:0 0;transform:rotate(-90deg) scaleX(0.86);">300</span>
<span style="left:259.5px;top:627.5px;font-size:10px;line-height:11px;color:#7d818d;transform-origin:0 0;transform:rotate(-90deg) scaleX(0.86);">400</span>
<span style="left:259.5px;top:727.5px;font-size:10px;line-height:11px;color:#7d818d;transform-origin:0 0;transform:rotate(-90deg) scaleX(0.86);">500</span>
<span style="left:259.5px;top:827.5px;font-size:10px;line-height:11px;color:#7d818d;transform-origin:0 0;transform:rotate(-90deg) scaleX(0.86);">600</span>
<svg style="left:285.00px;top:160.00px;" width="16" height="16" viewBox="0 0 16 16"><circle cx="8" cy="8" r="7" fill="#e0e0e0"/><path d="M4.5 8h7" stroke="#333" stroke-width="2"/></svg>
<svg style="left:372.00px;top:160.00px;" width="16" height="16" viewBox="0 0 16 16"><circle cx="8" cy="8" r="7" fill="#e0e0e0"/><path d="M4.5 8h7M8 4.5v7" stroke="#333" stroke-width="2"/></svg>
<span style="left:315.56px;top:157.80px;font-size:15px;line-height:20px;color:#ffffff;font-weight:400;transform-origin:0 50%;transform:scaleX(0.9443);text-shadow:0 1px 0 #000,0 -1px 0 #000,1px 0 0 #000,-1px 0 0 #000;">100 %</span>
<svg style="left:9.00px;top:7.00px;" width="16" height="16" viewBox="0 0 16 16"><path d="M.900 5.200L1.200 3.700 2.500 3.400 3.600 4.400 4 2 4.600 1 5.800 .900 6.400 1.800 7 2.600H9L9.600 1.800 10.200 .900 11.400 1 12 2 12.400 4.400 13.500 3.400 14.800 3.700 15.100 5.200 14.500 6V11C14.300 13.300 11.500 15 8 15S1.700 13.300 1.500 11V6Z" fill="#478cbf"/><circle cx="4.900" cy="8.200" r="1.500" fill="#fff"/><circle cx="11.100" cy="8.200" r="1.500" fill="#fff"/><circle cx="5" cy="8.300" r=".800" fill="#414042"/><circle cx="11" cy="8.300" r=".800" fill="#414042"/><rect x="7.400" y="7.700" width="1.200" height="1.900" rx=".500" fill="#d6e6f2"/><path d="M1.500 10.400H14.500V11.200H12.200V12.600H11.400V11.200H8.400V12.600H7.600V11.200H4.600V12.600H3.800V11.200H1.500Z" fill="#fff" opacity=".900"/></svg>
<svg style="left:748.00px;top:44.00px;" width="16" height="16" viewBox="0 0 16 16"><path d="M4.2 1L1 5h2.200v8h7.500v2.200L15 12l-4.300-3.200V11H5.200V5h2.200z" fill="#699ce8" /></svg>
<svg style="left:800.90px;top:44.00px;" width="16" height="16" viewBox="0 0 16 16"><path d="M4.200 1L1 5h2.200v6.100l-1.700 1.700 1.400 1.400L4.600 12.500h6.100v2.200L15 11.500l-4.300-3.200v2.200H6.600L11 6.100V8h2V2.500 2H7.500v2h2.100L5.200 8.400V5h2.200z" fill="#e0e0e0" /></svg>
<svg style="left:854.00px;top:44.00px;" width="16" height="16" viewBox="0 0 16 16"><path d="M6.600 1H13.300A2 2 0 0 1 15.300 3V5H12V13.300A2 2 0 0 1 10 15.300H2.500A2 2 0 0 1 .5 13.300V11H4.600V3A2 2 0 0 1 6.600 1Z" fill="#e0e0e0" /><path d="M12 5V3.200A1.100 1.100 0 0 0 10.400 2.300M4.600 11V13.300" fill="none" stroke="#9a9a9a" stroke-width="0.8" /></svg>
<svg style="left:928.00px;top:44.00px;" width="16" height="16" viewBox="0 0 16 16"><path d="M7 1v5.600L5.100 4.700 3.700 6.100 8 10.400l4.300-4.300-1.400-1.400L9 6.600V1zM1.500 9v6h13V9h-2v4h-9V9z" fill="#e0e0e0" /></svg>
<svg style="left:1469.50px;top:44.00px;" width="16" height="16" viewBox="0 0 16 16"><path d="M3.500 3.200v9.600a.7.700 0 0 0 1 .6l7.400-4.800a.7.700 0 0 0 0-1.200L4.500 2.600a.7.700 0 0 0-1 .600z" fill="#e0e0e0" /></svg>
<svg style="left:1502.00px;top:44.00px;" width="16" height="16" viewBox="0 0 16 16"><rect x="3" y="3" width="4" height="10" rx="1" fill="#6c707d"/><rect x="9" y="3" width="4" height="10" rx="1" fill="#6c707d"/></svg>
<svg style="left:1534.00px;top:44.00px;" width="16" height="16" viewBox="0 0 16 16"><rect x="3" y="3" width="10" height="10" rx="1.500" fill="#6c707d"/></svg>
<svg style="left:1569.90px;top:43.90px;" width="16" height="16" viewBox="0 0 16 16"><path d="M.900 6.900H15.200V15.100H2.900A2 2 0 0 1 .900 13.100ZM6 8.200l4.600 2.800L6 13.800z" fill="#e0e0e0" fill-rule="evenodd"/><path d="M0.700 4.200L3.100 3.900V5.800L0.700 6.100ZM4.600 3.700L7.000 3.400V5.300L4.600 5.600ZM8.700 3.200L11.100 2.900V4.800L8.700 5.100ZM12.600 2.400L15.200 2.100V4.000L12.600 4.300Z" fill="#e0e0e0"/></svg>
<svg style="left:1601.90px;top:43.90px;" width="16" height="16" viewBox="0 0 16 16"><path d="M.900 6.900H15.200V15.100H2.900A2 2 0 0 1 .900 13.100ZM3.500 8.600h3.200l1 1.100h4.800v3.800H3.500z" fill="#e0e0e0" fill-rule="evenodd"/><path d="M0.700 4.200L3.100 3.900V5.800L0.700 6.100ZM4.600 3.700L7.000 3.400V5.300L4.600 5.600ZM8.700 3.200L11.100 2.900V4.800L8.700 5.100ZM12.600 2.400L15.200 2.100V4.000L12.600 4.300Z" fill="#e0e0e0"/></svg>
<svg style="left:1680.00px;top:44.30px;" width="16" height="16" viewBox="2 2 12 12"><path d="M4.5 6.5L8 10L11.5 6.5" stroke="#b5628f" stroke-width="1.7" fill="none" stroke-linecap="round" stroke-linejoin="round"/></svg>
<svg style="left:233.00px;top:79.00px;" width="16" height="16" viewBox="0 0 16 16"><circle cx="8" cy="2" r="2.050" fill="#9094a0"/><circle cx="8" cy="8" r="2.050" fill="#9094a0"/><circle cx="8" cy="14" r="2.050" fill="#9094a0"/></svg>
<svg style="left:233.00px;top:504.00px;" width="16" height="16" viewBox="0 0 16 16"><circle cx="8" cy="2" r="2.050" fill="#9094a0"/><circle cx="8" cy="8" r="2.050" fill="#9094a0"/><circle cx="8" cy="14" r="2.050" fill="#9094a0"/></svg>
<svg style="left:1682.00px;top:79.00px;" width="16" height="16" viewBox="0 0 16 16"><circle cx="8" cy="2" r="2.050" fill="#9094a0"/><circle cx="8" cy="8" r="2.050" fill="#9094a0"/><circle cx="8" cy="14" r="2.050" fill="#9094a0"/></svg>
<svg style="left:20.00px;top:111.00px;" width="16" height="16" viewBox="0 0 16 16"><path d="M7 1v6H1v2h6v6h2V9h6V7H9V1z" fill="#e0e0e0" /></svg>
<svg style="left:52.00px;top:111.00px;" width="16" height="16" viewBox="0 0 16 16"><circle cx="5.060" cy="10.900" r="3.100" fill="none" stroke="#e0e0e0" stroke-width="1.900"/><circle cx="11" cy="4.950" r="3.100" fill="none" stroke="#e0e0e0" stroke-width="1.900"/><path d="M5.060 10.900L11 4.950" stroke="#333b4f" stroke-width="4.200"/><path d="M5.200 10.800L10.900 5.100" stroke="#e0e0e0" stroke-width="1.900" stroke-linecap="round"/></svg>
<svg style="left:189.40px;top:111.00px;" width="16" height="16" viewBox="0 0 16 16"><path d="M6.5 1.5a5 5 0 1 0 2.9 9.1l3.9 3.9 1.4-1.4-3.9-3.9A5 5 0 0 0 6.5 1.5zm0 2a3 3 0 1 1 0 6 3 3 0 0 1 0-6z" fill="#e0e0e0" /></svg>
<svg style="left:222.00px;top:111.00px;" width="16" height="16" viewBox="0 0 16 16"><path d="M6.200 .900H13.200A2 2 0 0 1 15.200 2.900V5.300H12.100V7.500H8V15H2.900A2 2 0 0 1 .900 13V9.900H4.200V2.900A2 2 0 0 1 6.200 .900Z" fill="#e0e0e0" /><path d="M12.100 5.300V3.200A1.100 1.100 0 0 0 10.500 2.300M4.200 9.900V13" fill="none" stroke="#a8a8a8" stroke-width="0.7" /><path d="M10.900 9v2.100H8.800v2h2.100v2.100h2v-2.100H15v-2h-2.100V9z" fill="#84ffb1" /></svg>
<svg style="left:18.75px;top:148.25px;" width="10.5" height="10.5" viewBox="2 2 12 12"><path d="M4.5 6.5L8 10L11.5 6.5" stroke="#8a8e99" stroke-width="1.9" fill="none" stroke-linecap="round" stroke-linejoin="round"/></svg>
<svg style="left:30.00px;top:145.00px;" width="16" height="16" viewBox="0 0 16 16"><circle cx="8" cy="8" r="5.1" fill="none" stroke="#a5efac" stroke-width="2"/></svg>
<svg style="left:220.00px;top:145.00px;" width="16" height="16" viewBox="0 0 16 16"><path d="M.800 8C3 3.500 5.500 1.800 8 1.800S13 3.500 15.200 8C13 12.500 10.500 14.200 8 14.200S3 12.500 .800 8ZM8 4.200a3.800 3.800 0 1 0 0 7.600 3.800 3.800 0 1 0 0-7.600zM8 5.900a2.100 2.100 0 1 0 0 4.200 2.100 2.100 0 1 0 0-4.200z" fill="#e0e0e0" fill-rule="evenodd"/></svg>
<svg style="left:30.05px;top:173.95px;" width="10.5" height="10.5" viewBox="2 2 12 12"><path d="M6.5 4.5L10 8L6.5 11.500" stroke="#8a8e99" stroke-width="1.9" fill="none" stroke-linecap="round" stroke-linejoin="round"/></svg>
<svg style="left:42.00px;top:171.00px;" width="16" height="16" viewBox="0 0 16 16"><circle cx="8" cy="8" r="5.1" fill="none" stroke="#a5efac" stroke-width="2"/></svg>
<svg style="left:220.00px;top:171.00px;" width="16" height="16" viewBox="0 0 16 16"><path d="M.800 8C3 3.500 5.500 1.800 8 1.800S13 3.500 15.200 8C13 12.500 10.500 14.200 8 14.200S3 12.500 .800 8ZM8 4.200a3.800 3.800 0 1 0 0 7.600 3.800 3.800 0 1 0 0-7.600zM8 5.900a2.100 2.100 0 1 0 0 4.200 2.100 2.100 0 1 0 0-4.200z" fill="#e0e0e0" fill-rule="evenodd"/></svg>
<svg style="left:16.40px;top:536.00px;" width="16" height="16" viewBox="0 0 16 16"><path d="M10 1.700L6.200 8l3.800 6.300" fill="none" stroke="#e0e0e0" stroke-width="2" /></svg>
<svg style="left:35.70px;top:536.00px;" width="16" height="16" viewBox="0 0 16 16"><path d="M6 1.700L9.800 8 6 14.300" fill="none" stroke="#6c707d" stroke-width="2" /></svg>
<svg style="left:193.40px;top:566.00px;" width="16" height="16" viewBox="0 0 16 16"><path d="M6.5 1.5a5 5 0 1 0 2.9 9.1l3.9 3.9 1.4-1.4-3.9-3.9A5 5 0 0 0 6.5 1.5zm0 2a3 3 0 1 1 0 6 3 3 0 0 1 0-6z" fill="#e0e0e0" /></svg>
<svg style="left:222.00px;top:566.00px;" width="16" height="16" viewBox="0 0 16 16"><path d="M3.900 3v10" fill="none" stroke="#e0e0e0" stroke-width="2" /><path d="M3.900 .800L.700 4.600h6.400zM3.900 15.200L.700 11.400h6.400z" fill="#e0e0e0" /><path d="M9.200 1h5.700v2H9.200zM9.200 7H13v2H9.200zM9.200 13h2v2h-2z" fill="#e0e0e0" /></svg>
<svg style="left:30.00px;top:600.00px;" width="16" height="16" viewBox="0 0 16 16"><path d="M8 .8l2.200 4.800 5.200.6-3.900 3.500 1.100 5.100L8 12.200l-4.600 2.600 1.100-5.100L.6 6.200l5.200-.6z" fill="#e0e0e0" /></svg>
<svg style="left:18.75px;top:629.25px;" width="10.5" height="10.5" viewBox="2 2 12 12"><path d="M4.5 6.5L8 10L11.5 6.5" stroke="#8a8e99" stroke-width="1.9" fill="none" stroke-linecap="round" stroke-linejoin="round"/></svg>
<svg style="left:30.00px;top:626.00px;" width="16" height="16" viewBox="0 0 16 16"><path d="M1 3.500A1.500 1.500 0 0 1 2.500 2h4l2 2.500h5A1.500 1.500 0 0 1 15 6v7a1 1 0 0 1-1 1H2a1 1 0 0 1-1-1z" fill="#84a5db" /></svg>
<svg style="left:42.00px;top:652.00px;" width="16" height="16" viewBox="0 0 16 16"><path d="M.900 6.900H15.200V15.100H2.900A2 2 0 0 1 .900 13.100Z" fill="#e0e0e0" /><path d="M0.700 4.200L3.100 3.900V5.800L0.700 6.100ZM4.600 3.700L7.000 3.400V5.300L4.600 5.600ZM8.700 3.200L11.100 2.900V4.800L8.700 5.100ZM12.600 2.400L15.200 2.100V4.000L12.600 4.300Z" fill="#e0e0e0"/></svg>
<svg style="left:42.00px;top:678.00px;" width="16" height="16" viewBox="0 0 16 16"><path d="M.900 6.900H15.200V15.100H2.900A2 2 0 0 1 .900 13.100Z" fill="#e0e0e0" /><path d="M0.700 4.200L3.100 3.900V5.800L0.700 6.100ZM4.600 3.700L7.000 3.400V5.300L4.600 5.600ZM8.700 3.200L11.100 2.900V4.800L8.700 5.100ZM12.600 2.400L15.200 2.100V4.000L12.600 4.300Z" fill="#e0e0e0"/></svg>
<svg style="left:42.00px;top:704.00px;" width="16" height="16" viewBox="0 0 16 16"><path d="M.900 6.900H15.200V15.100H2.900A2 2 0 0 1 .900 13.100Z" fill="#e0e0e0" /><path d="M0.700 4.200L3.100 3.900V5.800L0.700 6.100ZM4.600 3.700L7.000 3.400V5.300L4.600 5.600ZM8.700 3.200L11.100 2.900V4.800L8.700 5.100ZM12.600 2.400L15.200 2.100V4.000L12.600 4.300Z" fill="#e0e0e0"/></svg>
<svg style="left:42.00px;top:782.00px;" width="16" height="16" viewBox="0 0 16 16"><path d="M.900 6.900H15.200V15.100H2.900A2 2 0 0 1 .900 13.100Z" fill="#e0e0e0" /><path d="M0.700 4.200L3.100 3.900V5.800L0.700 6.100ZM4.600 3.700L7.000 3.400V5.300L4.600 5.600ZM8.700 3.200L11.100 2.900V4.800L8.700 5.100ZM12.600 2.400L15.200 2.100V4.000L12.600 4.300Z" fill="#e0e0e0"/></svg>
<svg style="left:42.00px;top:808.00px;" width="16" height="16" viewBox="0 0 16 16"><path d="M.900 6.900H15.200V15.100H2.900A2 2 0 0 1 .900 13.100Z" fill="#e0e0e0" /><path d="M0.700 4.200L3.100 3.900V5.800L0.700 6.100ZM4.600 3.700L7.000 3.400V5.300L4.600 5.600ZM8.700 3.200L11.100 2.900V4.800L8.700 5.100ZM12.600 2.400L15.200 2.100V4.000L12.600 4.300Z" fill="#e0e0e0"/></svg>
<svg style="left:42.00px;top:730.00px;" width="16" height="16" viewBox="0 0 16 16"><circle cx="8" cy="8" r="6.300" fill="none" stroke="#e0e0e0" stroke-width="1.700"/><ellipse cx="8" cy="8" rx="2.800" ry="6.300" fill="none" stroke="#e0e0e0" stroke-width="1.300"/><path d="M2 8h12" stroke="#e0e0e0" stroke-width="1.300"/></svg>
<svg style="left:42.00px;top:756.00px;" width="16" height="16" viewBox="0 0 16 16"><rect x="0" y="0" width="16" height="16" rx="2" fill="#355570"/><g transform="translate(1.600 1.800) scale(0.800)"><path d="M.900 5.200L1.200 3.700 2.500 3.400 3.600 4.400 4 2 4.600 1 5.800 .900 6.400 1.800 7 2.600H9L9.600 1.800 10.200 .900 11.400 1 12 2 12.400 4.400 13.500 3.400 14.800 3.700 15.100 5.200 14.500 6V11C14.300 13.300 11.500 15 8 15S1.700 13.300 1.500 11V6Z" fill="#478cbf"/><circle cx="4.900" cy="8.200" r="1.500" fill="#fff"/><circle cx="11.100" cy="8.200" r="1.500" fill="#fff"/><circle cx="5" cy="8.300" r=".800" fill="#414042"/><circle cx="11" cy="8.300" r=".800" fill="#414042"/><rect x="7.400" y="7.700" width="1.200" height="1.900" rx=".500" fill="#d6e6f2"/><path d="M1.500 10.400H14.500V11.200H12.200V12.600H11.400V11.200H8.400V12.600H7.600V11.200H4.600V12.600H3.800V11.200H1.500Z" fill="#fff" opacity=".900"/></g></svg>
<svg style="left:339.00px;top:79.00px;" width="16" height="16" viewBox="0 0 16 16"><circle cx="8" cy="8" r="5.1" fill="none" stroke="#a5efac" stroke-width="2"/></svg>
<svg style="left:469.00px;top:79.00px;" width="16" height="16" viewBox="0 0 16 16"><circle cx="8" cy="8" r="5.1" fill="none" stroke="#a5efac" stroke-width="2"/></svg>
<svg style="left:589.70px;top:79.00px;" width="16" height="16" viewBox="0 0 16 16"><circle cx="8" cy="8" r="5.1" fill="none" stroke="#a5efac" stroke-width="2"/></svg>
<svg style="left:684.80px;top:79.00px;" width="16" height="16" viewBox="0 0 16 16"><circle cx="8" cy="8" r="5.1" fill="none" stroke="#a5efac" stroke-width="2"/></svg>
<svg style="left:781.00px;top:79.00px;" width="16" height="16" viewBox="0 0 16 16"><circle cx="8" cy="8" r="5.1" fill="none" stroke="#a5efac" stroke-width="2"/></svg>
<svg style="left:949.00px;top:79.00px;" width="16" height="16" viewBox="0 0 16 16"><path d="M3 3l10 10M13 3L3 13" fill="none" stroke="#e0e0e0" stroke-width="2" stroke-linecap="round"/></svg>
<svg style="left:977.70px;top:78.00px;" width="16" height="16" viewBox="0 0 16 16"><path d="M8 1v14M1 8h14" fill="none" stroke="#8c8c8c" stroke-width="1.9" /></svg>
<svg style="left:1380.00px;top:79.00px;" width="16" height="16" viewBox="0 0 16 16"><path d="M1 1h4.700L1 5.700z" fill="#e0e0e0"/><path d="M2.500 2.500L5.700 5.700" stroke="#e0e0e0" stroke-width="1.900"/><g transform="rotate(90 8 8)"><path d="M1 1h4.700L1 5.700z" fill="#e0e0e0"/><path d="M2.500 2.500L6.300 6.300" stroke="#e0e0e0" stroke-width="1.900"/></g><g transform="rotate(180 8 8)"><path d="M1 1h4.700L1 5.700z" fill="#e0e0e0"/><path d="M2.500 2.500L6.300 6.300" stroke="#e0e0e0" stroke-width="1.900"/></g><g transform="rotate(270 8 8)"><path d="M1 1h4.700L1 5.700z" fill="#e0e0e0"/><path d="M2.500 2.500L6.300 6.300" stroke="#e0e0e0" stroke-width="1.900"/></g></svg>
<div style="left:292px;top:105px;width:1px;height:26px;background:#4b5266;"></div>
<div style="left:396px;top:105px;width:1px;height:26px;background:#4b5266;"></div>
<div style="left:532px;top:105px;width:1px;height:26px;background:#4b5266;"></div>
<div style="left:636px;top:105px;width:1px;height:26px;background:#4b5266;"></div>
<div style="left:708px;top:105px;width:1px;height:26px;background:#4b5266;"></div>
<div style="left:748px;top:105px;width:1px;height:26px;background:#4b5266;"></div>
<div style="left:788px;top:105px;width:1px;height:26px;background:#4b5266;"></div>
<div style="left:843px;top:105px;width:1px;height:26px;background:#4b5266;"></div>
<svg style="left:265.00px;top:110.00px;" width="16" height="16" viewBox="0 0 16 16"><path d="M1.560 1.560L5.060 14.440l2.310-3.690 3.250 3.250 1.880-1.880-3.250-3.250 3.690-2.310z" fill="#699ce8" /></svg>
<svg style="left:305.00px;top:110.00px;" width="16" height="16" viewBox="0 0 16 16"><path d="M8 1L5 4.200h6zM1 8l3.200-3v6zM15 8l-3.200-3v6zM8 15l-3-3.200h6z" fill="#e0e0e0" /><circle cx="8" cy="8" r="2" fill="#e0e0e0"/></svg>
<svg style="left:337.00px;top:110.00px;" width="16" height="16" viewBox="0 0 16 16"><path d="M4.140 12.900A6 6 0 1 1 12.600 12.160" fill="none" stroke="#e0e0e0" stroke-width="2.2" /><path d="M1.800 15.300h5.400v-4.500z" fill="#e0e0e0" /><circle cx="8" cy="8.300" r="2" fill="#e0e0e0"/></svg>
<svg style="left:369.00px;top:110.00px;" width="16" height="16" viewBox="0 0 16 16"><path d="M9 1v2h2.590l-1.300 1.290 1.420 1.420L13 4.410V7h2V1zM1 9v6h6v-2H4.410l1.300-1.290-1.420-1.420L3 11.590V9z" fill="#e0e0e0" /><circle cx="8" cy="8" r="2" fill="#e0e0e0"/></svg>
<svg style="left:409.00px;top:110.00px;" width="16" height="16" viewBox="0 0 16 16"><path d="M1 1.200h11.300V7h-2V3.200H3.400v3.100H9V8H3.400v5H7.500v2H1z" fill="#e0e0e0" /><path d="M8.300 7.800l2.900 7.500 1.100-3 2.100 2.100 1-1-2.100-2.100 3-1.100z" fill="#e0e0e0" /></svg>
<svg style="left:440.70px;top:110.00px;" width="16" height="16" viewBox="0 0 16 16"><path d="M7 1h2v3.700H7zM1 7h4.200v1.800H1zM7 11.600h1.200V15H7zM7.500 7.500l2.900 7.500 1.100-3 2.100 2.100 1-1-2.100-2.100 3-1.100z" fill="#e0e0e0" /></svg>
<svg style="left:473.50px;top:110.00px;" width="16" height="16" viewBox="0 0 16 16"><path d="M7.300 1.300a1 1 0 0 0-1 1V8h-.6V3.300a1 1 0 0 0-2 0V10l-1.600-1.500a1.100 1.100 0 0 0-1.600 1.500l3.300 4c.7.800 1.500 1.300 2.800 1.300h3c2 0 3.400-1.300 3.400-3.300V4.300a1 1 0 0 0-2 0V8h-.6V2.300a1 1 0 0 0-2 0V8h-.1V2.300a1 1 0 0 0-1-1z" fill="#e0e0e0" /></svg>
<svg style="left:504.50px;top:110.00px;" width="16" height="16" viewBox="0 0 16 16"><path d="M1.500 1.200v13.600h13.600zM4.200 8.200l4 4h-4z" fill="#e0e0e0" fill-rule="evenodd"/></svg>
<svg style="left:546.00px;top:110.00px;" width="16" height="16" viewBox="0 0 16 16"><path d="M2 3h2v2H2zM8 3h2v2H8zM2 9h2v2H2z" fill="#fff" /><g transform="translate(6 6.4) scale(1)"><path d="M0 8.500V4a4 4 0 0 1 8 0v4.500H6V4a2 2 0 0 0-4 0v4.500z" fill="#b9bbc3"/><path d="M0 6.500h2v2H0zM6 6.500h2v2H6z" fill="#fff"/></g></svg>
<svg style="left:576.30px;top:110.00px;" width="16" height="16" viewBox="0 0 16 16"><path d="M3.500 1v14M8.500 1v6M13.500 1v5M1 3.500h15M1 8.500h6M1 13.500h5" fill="none" stroke="#e0e0e0" stroke-width="1.5" /><g transform="translate(7.5 6.5) scale(1)"><path d="M0 8.500V4a4 4 0 0 1 8 0v4.500H6V4a2 2 0 0 0-4 0v4.500z" fill="#b9bbc3"/><path d="M0 6.500h2v2H0zM6 6.500h2v2H6z" fill="#fff"/></g></svg>
<svg style="left:609.00px;top:110.00px;" width="16" height="16" viewBox="0 0 16 16"><circle cx="8" cy="2" r="2.050" fill="#e0e0e0"/><circle cx="8" cy="8" r="2.050" fill="#e0e0e0"/><circle cx="8" cy="14" r="2.050" fill="#e0e0e0"/></svg>
<svg style="left:649.00px;top:110.00px;" width="16" height="16" viewBox="0 0 16 16"><path d="M8 1a4 4 0 0 0-4 4v2.500H2V15h12V7.500h-2V5a4 4 0 0 0-4-4zm0 2a2 2 0 0 1 2 2v2.500H6V5a2 2 0 0 1 2-2zM7.200 10h1.600v3H7.200z" fill="#e0e0e0" fill-rule="evenodd"/></svg>
<svg style="left:681.00px;top:110.00px;" width="16" height="16" viewBox="0 0 16 16"><rect x="7.700" y="2.300" width="6" height="6" fill="none" stroke="#7f8391" stroke-width="1.600"/><path d="M1.800 7.500h7.500V15H1.800z" fill="#7f8391" /><path d="M1 1h2.200v2.200H1zM12.800 1H15v2.200h-2.200zM1 12.800h2.200V15H1zM12.800 12.800H15V15h-2.200z" fill="#fff" /></svg>
<svg style="left:721.00px;top:110.00px;" width="16" height="16" viewBox="0 0 16 16"><g transform="rotate(-45 8 8)" fill="#e0e0e0"><rect x="2.500" y="6.600" width="11" height="2.800"/><circle cx="2.700" cy="6.200" r="2"/><circle cx="2.700" cy="9.800" r="2"/><circle cx="13.300" cy="6.200" r="2"/><circle cx="13.300" cy="9.800" r="2"/></g></svg>
<svg style="left:759.70px;top:110.00px;" width="16" height="16" viewBox="0 0 16 16"><circle cx="4.500" cy="6" r="2.600" fill="#606b93"/><circle cx="9.300" cy="4.700" r="3.200" fill="#606b93"/><path d="M3 7h9v5a1 1 0 0 1-1 1H4a1 1 0 0 1-1-1zM11.500 9.500L15 7v6l-3.500-2.500z" fill="#606b93" /></svg>
<svg style="left:856.00px;top:110.00px;" width="16" height="16" viewBox="0 0 16 16"><path d="M1 1h14v14H1zM3 3v4h3.400V3zM8.400 3v4H13V3zM3 9v4h3.400V9zM8.400 9v4H13V9z" fill="#a5efac" fill-rule="evenodd"/></svg>
<svg style="left:935.00px;top:110.00px;" width="16" height="16" viewBox="0 0 16 16"><circle cx="8" cy="3.300" r="1.700" fill="none" stroke="#e0e0e0" stroke-width="1.500"/><path d="M8 5v9.500M5 7.500h6M2 9.500c.5 3 3 5 6 5s5.500-2 6-5" fill="none" stroke="#e0e0e0" stroke-width="1.7" /><path d="M.7 8.500l3.300.8-2.400 2.300zM15.300 8.500l-3.300.8 2.400 2.300z" fill="#e0e0e0" /></svg>
<svg style="left:1421.00px;top:111.00px;" width="16" height="16" viewBox="0 0 16 16"><path d="M2 1V15H14V6H9V1ZM10 1V5H14Z" fill="#e0e0e0" /><path d="M11 9v2H9v2h2v2h2v-2h2v-2h-2V9z" fill="#84ffb1" stroke="#333b4f" stroke-width="1.500" paint-order="stroke"/></svg>
<svg style="left:1453.00px;top:111.00px;" width="16" height="16" viewBox="0 0 16 16"><path d="M1.800 13.800V3.500a1 1 0 0 1 1-1h2.800l1.500 1.800h4.500a1 1 0 0 1 1 1v1.200" fill="none" stroke="#e0e0e0" stroke-width="1.5" /><path d="M4.800 6.700H15.300L13 14.700H2.300Z" fill="#e0e0e0" /></svg>
<svg style="left:1485.00px;top:111.00px;" width="16" height="16" viewBox="0 0 16 16"><path d="M2.500 1H11.500L15 4.500V13.500A1.500 1.500 0 0 1 13.500 15H2.500A1.500 1.500 0 0 1 1 13.500V2.500A1.500 1.500 0 0 1 2.500 1ZM4 1V6H11V1ZM8 8.300a1.900 1.900 0 1 0 0 3.800 1.900 1.900 0 1 0 0-3.800z" fill="#70747f" fill-rule="evenodd"/><path d="M5 1V5H7V1Z" fill="#70747f" /></svg>
<svg style="left:1517.00px;top:111.00px;" width="16" height="16" viewBox="0 0 16 16"><circle cx="8" cy="2" r="2.050" fill="#e0e0e0"/><circle cx="8" cy="8" r="2.050" fill="#e0e0e0"/><circle cx="8" cy="14" r="2.050" fill="#e0e0e0"/></svg>
<svg style="left:1619.00px;top:111.00px;" width="16" height="16" viewBox="0 0 16 16"><path d="M10 1.700L6.200 8l3.800 6.300" fill="none" stroke="#e0e0e0" stroke-width="2" /></svg>
<svg style="left:1643.00px;top:111.00px;" width="16" height="16" viewBox="0 0 16 16"><path d="M6 1.700L9.800 8 6 14.300" fill="none" stroke="#6c707d" stroke-width="2" /></svg>
<svg style="left:1671.00px;top:111.00px;" width="16" height="16" viewBox="0 0 16 16"><path d="M4.900 7.900A4.600 4.600 0 1 1 8.700 12.430" fill="none" stroke="#e0e0e0" stroke-width="1.7" /><path d="M1.300 7.600h5.700l-2.850 3.900z" fill="#e0e0e0" /><path d="M9.500 4.700V8.600H12" fill="none" stroke="#e0e0e0" stroke-width="1.5" /></svg>
<svg style="left:1419.00px;top:141.00px;" width="16" height="16" viewBox="0 0 16 16"><circle cx="8" cy="8" r="5.1" fill="none" stroke="#a5efac" stroke-width="2"/></svg>
<svg style="left:1643.00px;top:145.50px;" width="10" height="10" viewBox="2 2 12 12"><path d="M4.5 6.5L8 10L11.5 6.5" stroke="#a9acb5" stroke-width="2" fill="none" stroke-linecap="round" stroke-linejoin="round"/></svg>
<svg style="left:1670.50px;top:141.00px;" width="16" height="16" viewBox="0 0 16 16"><circle cx="10" cy="3.900" r="3.100" fill="none" stroke="#e0e0e0" stroke-width="1.600"/><path d="M7.800 6.100L4.400 8.700" fill="none" stroke="#e0e0e0" stroke-width="1.8" /><text x=".300" y="16" font-family="Liberation Sans" font-weight="700" font-size="8" fill="#e0e0e0" textLength="15.400" lengthAdjust="spacingAndGlyphs">DOC</text></svg>
<svg style="left:1638.40px;top:171.00px;" width="16" height="16" viewBox="0 0 16 16"><path d="M6.5 1.5a5 5 0 1 0 2.9 9.1l3.9 3.9 1.4-1.4-3.9-3.9A5 5 0 0 0 6.5 1.5zm0 2a3 3 0 1 1 0 6 3 3 0 0 1 0-6z" fill="#e0e0e0" /></svg>
<svg style="left:1671.00px;top:171.00px;" width="16" height="16" viewBox="0 0 16 16"><path d="M4.700 2V9.500" fill="none" stroke="#e0e0e0" stroke-width="1.5" /><path d="M3.500 3.200L4.700 .800 5.900 3.200Z" fill="#e0e0e0" /><rect x="2.200" y="9" width="5" height="5.800" rx="1.600" fill="#e0e0e0"/><path d="M10 7H12V14.700H10ZM8.400 1.500V4.700a2.600 2.600 0 0 0 5.200 0V1.500H11.900V5H10.100V1.500Z" fill="#e0e0e0" /></svg>
<svg style="left:1513.00px;top:203.00px;" width="16" height="16" viewBox="0 0 16 16"><circle cx="8" cy="8" r="5.1" fill="none" stroke="#a5efac" stroke-width="2"/></svg>
</div></body></html>
